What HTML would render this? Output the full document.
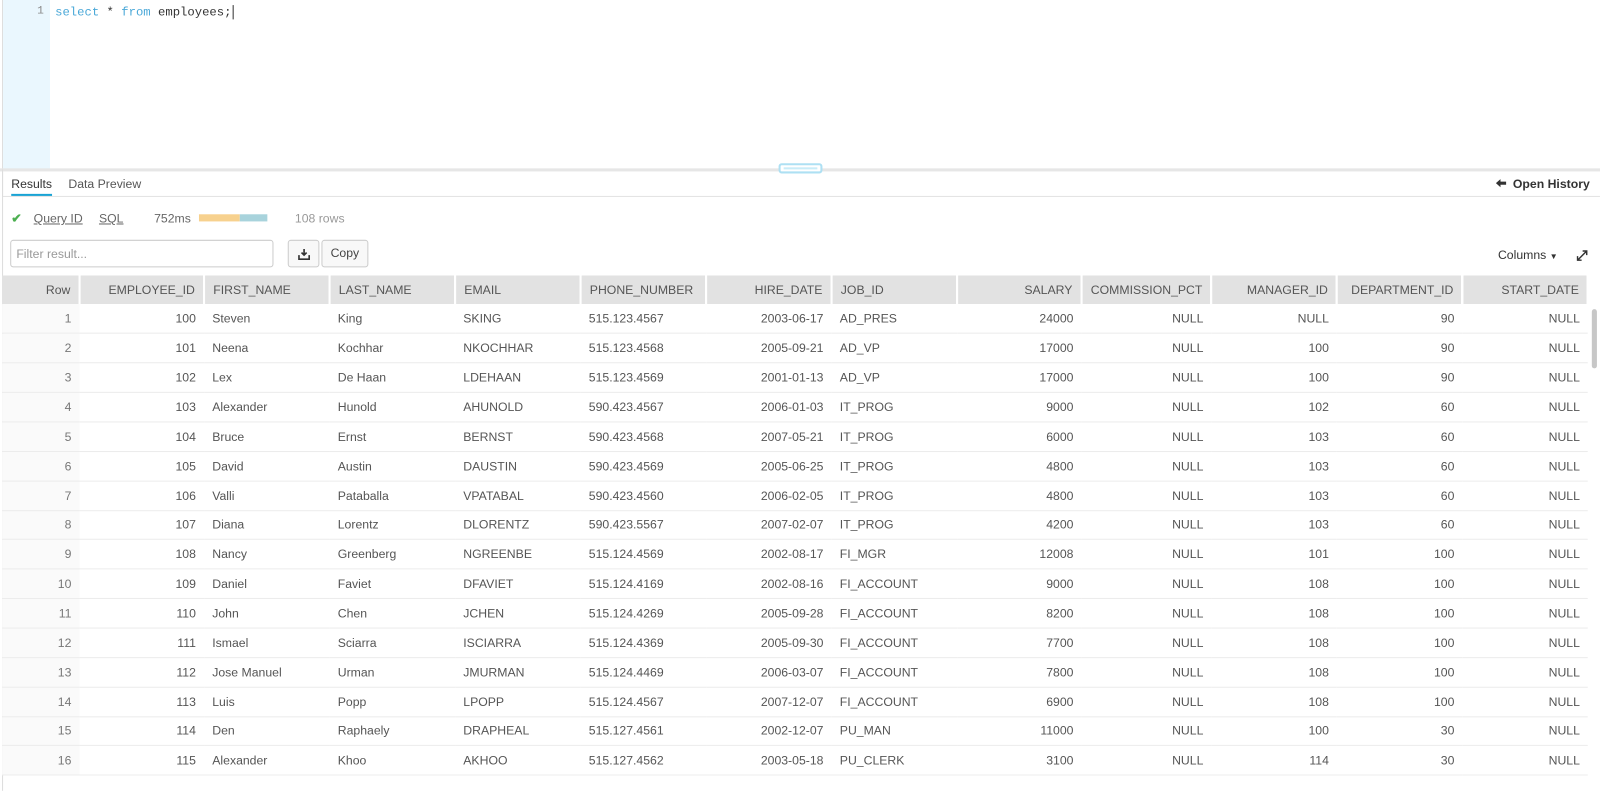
<!DOCTYPE html>
<html><head><meta charset="utf-8"><style>
*{box-sizing:border-box;margin:0;padding:0}
body{width:1600px;height:775px;overflow:hidden;background:#fff;font-family:"Liberation Sans",sans-serif;color:#555;position:relative}
#w{position:absolute;left:0;top:0;width:1568px;height:760px;transform:scale(1.0204);transform-origin:0 0}
.editor{position:absolute;left:2px;top:0;width:1566px;height:166px;border-left:1px solid #ddd;}
.gutter{position:absolute;left:0;top:0;width:46px;height:166px;background:#eaf7fe}
.ln{position:absolute;left:0;width:40px;top:5px;text-align:right;font:11px "Liberation Mono",monospace;color:#888}
.code{position:absolute;left:51px;top:5px;font:12px "Liberation Mono",monospace;color:#333}
.kw{color:#4aa8d8}
.split{position:absolute;left:0;top:165px;width:1568px;height:3px;background:#e6e6e6}
.handle{position:absolute;left:763px;top:160px;width:43px;height:10px;border:2px solid #aee0f3;border-radius:3px;background:#fff}
.handle:after{content:"";position:absolute;left:3px;right:3px;top:2px;height:2px;background:#c8ecf8}
.tabs{position:absolute;left:2px;top:168px;width:1566px;height:25px;border-bottom:1px solid #e3e3e3;border-left:1px solid #ddd;font-size:12px}
.tab{position:absolute;top:5px;color:#555}
.tab.on{color:#333;border-bottom:2px solid #1aa3d4;height:19px}
.hist{position:absolute;right:10px;top:5px;color:#333;font-weight:bold;font-size:12px}
.info{position:absolute;top:207px;font-size:12px;color:#666}
.u{text-decoration:underline}
input{position:absolute;left:10px;top:235px;width:258px;height:27px;border:1px solid #ccc;border-radius:3px;font:12px "Liberation Sans",sans-serif;padding-left:5px;color:#999}
.btn{position:absolute;top:235px;height:27px;border:1px solid #ccc;border-radius:3px;background:#f8f8f8;font-size:12px;color:#444;text-align:center;line-height:25px}
table{position:absolute;left:2px;top:270px;border-collapse:collapse;table-layout:fixed;font-size:12px}
th{background:#e2e2e2;font-weight:normal;height:28px;color:#555;border-right:2px solid #fff;padding:0 8px;white-space:nowrap;overflow:hidden}
td{height:28.86px;border-bottom:1px solid #ececec;padding:0 8px;white-space:nowrap;color:#555}
td:first-child{background:#fafafa;color:#777}
.r{text-align:right}.l{text-align:left}
.lb{position:absolute;left:2px;top:166px;width:1px;height:609px;background:#ddd}
.sb{position:absolute;left:1560px;top:303px;width:5px;height:58px;background:#c7c7c7;border-radius:3px}
</style></head><body><div id="w">
<div class="editor"><div class="gutter"><div class="ln">1</div></div>
<div class="code"><span class="kw">select</span> * <span class="kw">from</span> employees;<span style="border-left:1px solid #333;margin-left:1px"></span></div></div>
<div class="split"></div><div class="handle"></div>
<div class="tabs"><span class="tab on" style="left:8px">Results</span><span class="tab" style="left:64px">Data Preview</span>
<span class="hist"><svg width="11" height="9" viewBox="0 0 11 9" style="margin-right:6px;vertical-align:0"><path d="M0 4.5L4.5 0.5V3H10V6H4.5V8.5Z" fill="#333"/></svg>Open History</span></div>
<div class="info" style="left:11px;color:#4caf50;font-weight:bold">✔</div>
<div class="info u" style="left:33px">Query ID</div>
<div class="info u" style="left:97px">SQL</div>
<div class="info" style="left:151px">752ms</div>
<div style="position:absolute;left:195px;top:210px;width:40px;height:7px;background:#f7d18e"></div>
<div style="position:absolute;left:235px;top:210px;width:27px;height:7px;background:#a8d3dc"></div>
<div class="info" style="left:289px;color:#999">108 rows</div>
<input value="Filter result...">
<div class="btn" style="left:282px;width:31px"><svg width="12" height="12" viewBox="0 0 12 12" style="margin-top:7px"><path d="M6 1V7M3.5 4.5L6 7L8.5 4.5" stroke="#333" stroke-width="1.6" fill="none"/><path d="M1 7V11H11V7" stroke="#333" stroke-width="1.6" fill="none"/></svg></div>
<div class="btn" style="left:315px;width:46px">Copy</div>
<div style="position:absolute;left:1468px;top:243px;font-size:12px;color:#333">Columns <span style="font-size:8px">▼</span></div>
<div style="position:absolute;left:1545px;top:243px"><svg width="11" height="11" viewBox="0 0 11 11"><path d="M6 1H10V5M10 1L1 10M1 6V10H5" stroke="#333" stroke-width="1.4" fill="none"/></svg></div>
<div class="lb"></div>
<table>
<colgroup><col style="width:76px"><col style="width:122px"><col style="width:123px"><col style="width:123px"><col style="width:123px"><col style="width:123px"><col style="width:123px"><col style="width:123px"><col style="width:122px"><col style="width:123px"><col style="width:123px"><col style="width:123px"><col style="width:123px"></colgroup>
<tr><th class="r">Row</th><th class="r">EMPLOYEE_ID</th><th class="l">FIRST_NAME</th><th class="l">LAST_NAME</th><th class="l">EMAIL</th><th class="l">PHONE_NUMBER</th><th class="r">HIRE_DATE</th><th class="l">JOB_ID</th><th class="r">SALARY</th><th class="r">COMMISSION_PCT</th><th class="r">MANAGER_ID</th><th class="r">DEPARTMENT_ID</th><th class="r">START_DATE</th></tr>
<tr><td class="r">1</td><td class="r">100</td><td>Steven</td><td>King</td><td>SKING</td><td>515.123.4567</td><td class="r">2003-06-17</td><td>AD_PRES</td><td class="r">24000</td><td class="r">NULL</td><td class="r">NULL</td><td class="r">90</td><td class="r">NULL</td></tr>
<tr><td class="r">2</td><td class="r">101</td><td>Neena</td><td>Kochhar</td><td>NKOCHHAR</td><td>515.123.4568</td><td class="r">2005-09-21</td><td>AD_VP</td><td class="r">17000</td><td class="r">NULL</td><td class="r">100</td><td class="r">90</td><td class="r">NULL</td></tr>
<tr><td class="r">3</td><td class="r">102</td><td>Lex</td><td>De Haan</td><td>LDEHAAN</td><td>515.123.4569</td><td class="r">2001-01-13</td><td>AD_VP</td><td class="r">17000</td><td class="r">NULL</td><td class="r">100</td><td class="r">90</td><td class="r">NULL</td></tr>
<tr><td class="r">4</td><td class="r">103</td><td>Alexander</td><td>Hunold</td><td>AHUNOLD</td><td>590.423.4567</td><td class="r">2006-01-03</td><td>IT_PROG</td><td class="r">9000</td><td class="r">NULL</td><td class="r">102</td><td class="r">60</td><td class="r">NULL</td></tr>
<tr><td class="r">5</td><td class="r">104</td><td>Bruce</td><td>Ernst</td><td>BERNST</td><td>590.423.4568</td><td class="r">2007-05-21</td><td>IT_PROG</td><td class="r">6000</td><td class="r">NULL</td><td class="r">103</td><td class="r">60</td><td class="r">NULL</td></tr>
<tr><td class="r">6</td><td class="r">105</td><td>David</td><td>Austin</td><td>DAUSTIN</td><td>590.423.4569</td><td class="r">2005-06-25</td><td>IT_PROG</td><td class="r">4800</td><td class="r">NULL</td><td class="r">103</td><td class="r">60</td><td class="r">NULL</td></tr>
<tr><td class="r">7</td><td class="r">106</td><td>Valli</td><td>Pataballa</td><td>VPATABAL</td><td>590.423.4560</td><td class="r">2006-02-05</td><td>IT_PROG</td><td class="r">4800</td><td class="r">NULL</td><td class="r">103</td><td class="r">60</td><td class="r">NULL</td></tr>
<tr><td class="r">8</td><td class="r">107</td><td>Diana</td><td>Lorentz</td><td>DLORENTZ</td><td>590.423.5567</td><td class="r">2007-02-07</td><td>IT_PROG</td><td class="r">4200</td><td class="r">NULL</td><td class="r">103</td><td class="r">60</td><td class="r">NULL</td></tr>
<tr><td class="r">9</td><td class="r">108</td><td>Nancy</td><td>Greenberg</td><td>NGREENBE</td><td>515.124.4569</td><td class="r">2002-08-17</td><td>FI_MGR</td><td class="r">12008</td><td class="r">NULL</td><td class="r">101</td><td class="r">100</td><td class="r">NULL</td></tr>
<tr><td class="r">10</td><td class="r">109</td><td>Daniel</td><td>Faviet</td><td>DFAVIET</td><td>515.124.4169</td><td class="r">2002-08-16</td><td>FI_ACCOUNT</td><td class="r">9000</td><td class="r">NULL</td><td class="r">108</td><td class="r">100</td><td class="r">NULL</td></tr>
<tr><td class="r">11</td><td class="r">110</td><td>John</td><td>Chen</td><td>JCHEN</td><td>515.124.4269</td><td class="r">2005-09-28</td><td>FI_ACCOUNT</td><td class="r">8200</td><td class="r">NULL</td><td class="r">108</td><td class="r">100</td><td class="r">NULL</td></tr>
<tr><td class="r">12</td><td class="r">111</td><td>Ismael</td><td>Sciarra</td><td>ISCIARRA</td><td>515.124.4369</td><td class="r">2005-09-30</td><td>FI_ACCOUNT</td><td class="r">7700</td><td class="r">NULL</td><td class="r">108</td><td class="r">100</td><td class="r">NULL</td></tr>
<tr><td class="r">13</td><td class="r">112</td><td>Jose Manuel</td><td>Urman</td><td>JMURMAN</td><td>515.124.4469</td><td class="r">2006-03-07</td><td>FI_ACCOUNT</td><td class="r">7800</td><td class="r">NULL</td><td class="r">108</td><td class="r">100</td><td class="r">NULL</td></tr>
<tr><td class="r">14</td><td class="r">113</td><td>Luis</td><td>Popp</td><td>LPOPP</td><td>515.124.4567</td><td class="r">2007-12-07</td><td>FI_ACCOUNT</td><td class="r">6900</td><td class="r">NULL</td><td class="r">108</td><td class="r">100</td><td class="r">NULL</td></tr>
<tr><td class="r">15</td><td class="r">114</td><td>Den</td><td>Raphaely</td><td>DRAPHEAL</td><td>515.127.4561</td><td class="r">2002-12-07</td><td>PU_MAN</td><td class="r">11000</td><td class="r">NULL</td><td class="r">100</td><td class="r">30</td><td class="r">NULL</td></tr>
<tr><td class="r">16</td><td class="r">115</td><td>Alexander</td><td>Khoo</td><td>AKHOO</td><td>515.127.4562</td><td class="r">2003-05-18</td><td>PU_CLERK</td><td class="r">3100</td><td class="r">NULL</td><td class="r">114</td><td class="r">30</td><td class="r">NULL</td></tr>
</table>
<div class="sb"></div>
</div></body></html>
